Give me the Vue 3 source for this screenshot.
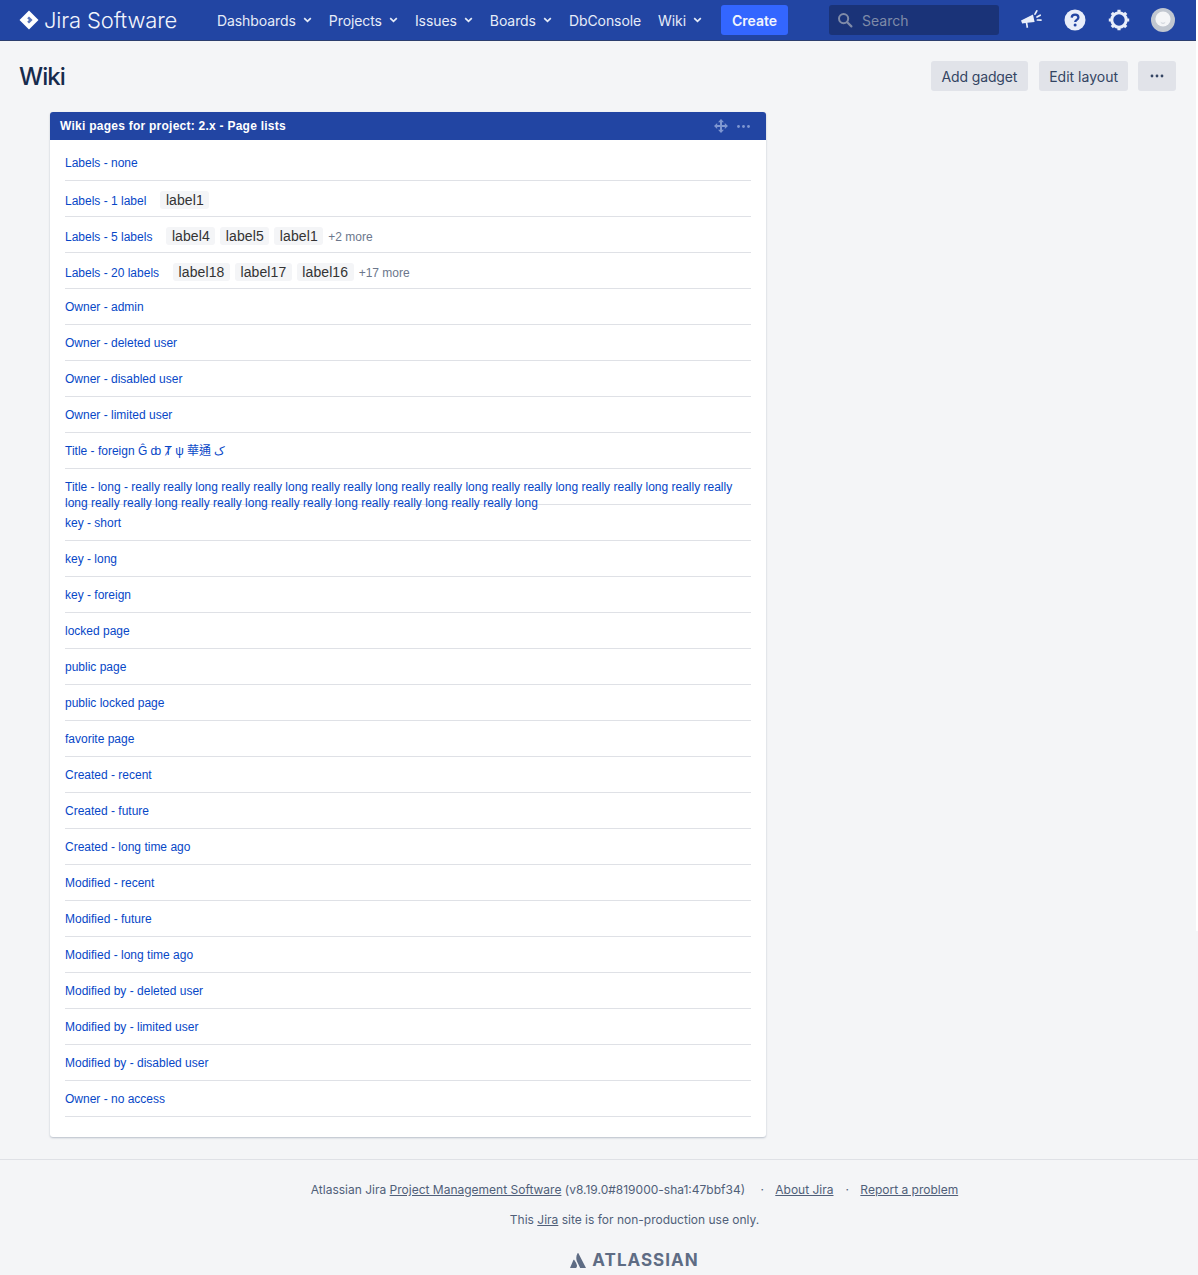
<script setup>
const nav = [
  { t: 'Dashboards', c: true },
  { t: 'Projects', c: true },
  { t: 'Issues', c: true },
  { t: 'Boards', c: true },
  { t: 'DbConsole', c: false },
  { t: 'Wiki', c: true }
]
const longTitle = 'Title - long - really really long really really long really really long really really long really really long really really long really really long really really long really really long really really long really really long really really long'
const rows = [
  { t: 'Labels - none' },
  { t: 'Labels - 1 label', tags: ['label1'] },
  { t: 'Labels - 5 labels', tags: ['label4', 'label5', 'label1'], more: '+2 more' },
  { t: 'Labels - 20 labels', tags: ['label18', 'label17', 'label16'], more: '+17 more' },
  { t: 'Owner - admin' },
  { t: 'Owner - deleted user' },
  { t: 'Owner - disabled user' },
  { t: 'Owner - limited user' },
  { t: 'Title - foreign Ĝ ȸ Ⱦ ψ 華通 ک' },
  { t: longTitle },
  { t: 'key - short' },
  { t: 'key - long' },
  { t: 'key - foreign' },
  { t: 'locked page' },
  { t: 'public page' },
  { t: 'public locked page' },
  { t: 'favorite page' },
  { t: 'Created - recent' },
  { t: 'Created - future' },
  { t: 'Created - long time ago' },
  { t: 'Modified - recent' },
  { t: 'Modified - future' },
  { t: 'Modified - long time ago' },
  { t: 'Modified by - deleted user' },
  { t: 'Modified by - limited user' },
  { t: 'Modified by - disabled user' },
  { t: 'Owner - no access' }
]
</script>

<template>
  <div class="page">
    <header class="topbar">
      <div class="logo">
        <svg class="logo-mark" width="20" height="20" viewBox="0 0 20 20">
          <path fill="#fff" d="M10 0.5 19.5 10 10 19.5 0.5 10Z" />
          <path fill="#2245a3" d="M10 6.4 13.6 10 10 13.6 8.2 11.8 10 10 8.2 8.2Z" opacity="0.75" />
        </svg>
        <span class="logo-text">Jira Software</span>
      </div>
      <nav class="nav">
        <a v-for="n in nav" :key="n.t" class="nav-item">
          {{ n.t }}
          <svg v-if="n.c" width="9" height="6" viewBox="0 0 9 6"><path d="M1.2 1.2 4.5 4.4 7.8 1.2" fill="none" stroke="#e6ecf8" stroke-width="1.7" /></svg>
        </a>
        <button class="create">Create</button>
      </nav>
      <div class="search">
        <svg width="16" height="16" viewBox="0 0 16 16"><circle cx="6.6" cy="6.6" r="4.6" fill="none" stroke="#7f8ba8" stroke-width="2" /><path d="M10.2 10.2 14.4 14.4" stroke="#7f8ba8" stroke-width="2.2" stroke-linecap="round" /></svg>
        <span>Search</span>
      </div>
      <div class="tools">
        <svg width="22" height="22" viewBox="0 0 22 22">
          <path fill="#e9eefa" d="M1 11.5 13 5.5 14.6 13 7.4 13.8 8.2 18.6 6.6 18.9 5.7 14 2.2 14.4Z" />
          <path d="M15 5.2 16.8 1.8M17 8 20.2 6.2M17.4 11 21 11.2" stroke="#e9eefa" stroke-width="1.7" stroke-linecap="round" />
        </svg>
        <svg width="22" height="22" viewBox="0 0 22 22">
          <circle cx="11" cy="11" r="10.5" fill="#e9eefa" />
          <path d="M7.7 8.6C7.8 6.6 9.2 5.6 11.1 5.6 13 5.6 14.4 6.7 14.4 8.4 14.4 10.8 11.2 10.8 11.2 13" fill="none" stroke="#2245a3" stroke-width="2.3" />
          <circle cx="11.1" cy="16" r="1.5" fill="#2245a3" />
        </svg>
        <svg width="22" height="22" viewBox="0 0 22 22">
          <circle cx="11" cy="11" r="7.2" fill="none" stroke="#e9eefa" stroke-width="3" />
          <g stroke="#e9eefa" stroke-width="3.2">
            <path d="M11 0.8V3.6M11 18.4V21.2M0.8 11H3.6M18.4 11H21.2M3.8 3.8 5.8 5.8M16.2 16.2 18.2 18.2M3.8 18.2 5.8 16.2M16.2 5.8 18.2 3.8" />
          </g>
        </svg>
        <svg class="avatar" width="24" height="24" viewBox="0 0 24 24">
          <circle cx="12" cy="12" r="12" fill="#c1c7d0" />
          <circle cx="12" cy="11" r="7.6" fill="#f4f5f7" />
          <path d="M9.8 14.4C10.8 15.6 13.2 15.6 14.2 14.4" fill="none" stroke="#c1c7d0" stroke-width="0.8" />
        </svg>
      </div>
    </header>

    <main class="main">
      <div class="title-row">
        <h1>Wiki</h1>
        <div class="actions">
          <button class="btn tight">Add gadget</button>
          <button class="btn edit">Edit layout</button>
          <button class="btn dots" aria-label="more">
            <svg width="14" height="4" viewBox="0 0 14 4"><circle cx="2" cy="2" r="1.4" /><circle cx="7" cy="2" r="1.4" /><circle cx="12" cy="2" r="1.4" /></svg>
          </button>
        </div>
      </div>

      <section class="gadget">
        <div class="gadget-head">
          <span>Wiki pages for project: 2.x - Page lists</span>
          <div class="gadget-tools">
            <svg width="14" height="14" viewBox="0 0 14 14">
              <path d="M7 1V13M1 7H13" stroke="#7f97d1" stroke-width="2" />
              <path fill="#7f97d1" d="M7 0 10 3.2H4ZM7 14 4 10.8H10ZM0 7 3.2 4V10ZM14 7 10.8 10V4Z" />
            </svg>
            <svg width="13" height="3" viewBox="0 0 13 3" fill="#7f97d1"><circle cx="1.5" cy="1.5" r="1.4" /><circle cx="6.5" cy="1.5" r="1.4" /><circle cx="11.5" cy="1.5" r="1.4" /></svg>
          </div>
        </div>
        <ul class="list">
          <li v-for="r in rows" :key="r.t" class="row" :class="{ tagged: r.tags }">
            <a class="link">{{ r.t }}</a>
            <template v-if="r.tags">
              <span class="tags">
                <span v-for="l in r.tags" :key="l" class="tag">{{ l }}</span>
              </span>
              <span v-if="r.more" class="more">{{ r.more }}</span>
            </template>
          </li>
        </ul>
      </section>
    </main>

    <footer class="footer">
      <p class="foot-line">
        Atlassian Jira <a>Project Management Software</a> (v8.19.0#819000-sha1:47bbf34)
        <span class="sep">·</span> <a>About Jira</a>
        <span class="sep">·</span> <a>Report a problem</a>
      </p>
      <p class="foot-line second">This <a>Jira</a> site is for non-production use only.</p>
      <div class="atl">
        <svg width="16" height="15" viewBox="0 0 16 15">
          <path fill="#5e6c84" d="M7.6 0.3C6 2.9 5.9 5.9 7 8.4L10.2 15H16L8.4 0.3C8.2-0.1 7.8-0.1 7.6 0.3Z" />
          <path fill="#5e6c84" d="M4.3 7C4 6.6 3.6 6.7 3.4 7.1L0 15H6.2L7.1 12.9C6.6 10.8 5.7 8.8 4.3 7Z" />
        </svg>
        <span>ATLASSIAN</span>
      </div>
    </footer>
    <div class="edge-strip"></div>
  </div>
</template>

<style scoped>
.page {
  position: relative;
  width: 1198px;
  min-height: 1275px;
  background: #f4f5f7;
  font-family: Inter, "Liberation Sans", sans-serif;
  color: #172b4d;
  overflow: hidden;
}
.edge-strip {
  position: absolute;
  top: 0;
  right: 0;
  width: 2px;
  height: 931px;
  background: #fff;
}
.topbar {
  height: 40px;
  box-sizing: content-box;
  background: #2245a3;
  border-bottom: 1px solid #2c3e6e;
  display: flex;
  align-items: center;
}
.logo {
  display: flex;
  align-items: center;
  margin-left: 19px;
  width: 190px;
  gap: 5px;
}
.logo-text {
  color: #f2f5fc;
  font-size: 22px;
  font-weight: 300;
  letter-spacing: -0.15px;
  white-space: nowrap;
}
.nav {
  display: flex;
  align-items: center;
  margin-left: 8px;
}
.nav-item {
  display: flex;
  align-items: center;
  gap: 7px;
  color: #e6ecf8;
  font-size: 14px;
  letter-spacing: -0.08px;
  margin-right: 17px;
  white-space: nowrap;
}
.create {
  margin-left: 2px;
  width: 67px;
  height: 30px;
  border: 0;
  border-radius: 3px;
  background: #3366ff;
  color: #f2f5fc;
  font: 600 14px Inter, "Liberation Sans", sans-serif;
}
.search {
  margin-left: 41px;
  width: 170px;
  height: 30px;
  box-sizing: border-box;
  padding-left: 8px;
  border-radius: 3px;
  background: #1a3378;
  display: flex;
  align-items: center;
  gap: 9px;
  color: #7f8ba8;
  font-size: 14px;
}
.tools {
  display: flex;
  align-items: center;
  margin-left: 21px;
  gap: 22px;
}
.avatar {
  margin-left: -1px;
}
.main {
  padding: 0 22px 0 19px;
}
.title-row {
  height: 71px;
  display: flex;
  align-items: center;
  justify-content: space-between;
}
h1 {
  margin: 0;
  font-size: 24px;
  font-weight: 500;
  line-height: 28px;
  letter-spacing: -0.9px;
  color: #172b4d;
}
.actions {
  display: flex;
  gap: 10px;
  margin-top: -1px;
}
.btn {
  height: 30px;
  padding: 0 11px;
  border: 0;
  border-radius: 3px;
  background: #e1e3e9;
  color: #344563;
  font: 400 14px Inter, "Liberation Sans", sans-serif;
}
.tight {
  letter-spacing: -0.15px;
  margin-right: 1px;
}
.edit {
  padding: 0 10px;
}
.dots {
  width: 38px;
  display: flex;
  align-items: center;
  justify-content: center;
  fill: #344563;
}
.gadget {
  width: 716px;
  margin-left: 31px;
  background: #fff;
  border-radius: 3px;
  box-shadow: 0 1px 2px rgba(9, 30, 66, 0.25);
  padding-bottom: 20px;
}
.gadget-head {
  height: 28px;
  padding: 0 16px 0 10px;
  background: #2245a3;
  border-radius: 3px 3px 0 0;
  color: #fff;
  font: 700 12px/28px "Liberation Sans", sans-serif;
  letter-spacing: 0.25px;
  display: flex;
  align-items: center;
  justify-content: space-between;
}
.gadget-tools {
  display: flex;
  align-items: center;
  gap: 9px;
}
.list {
  list-style: none;
  margin: 0 15px;
  padding: 5px 0 0;
}
.row {
  height: 36px;
  box-sizing: border-box;
  border-bottom: 1px solid #dfe1e6;
  padding-top: 10px;
  font: 12px/16px "Liberation Sans", "Noto Sans CJK TC", sans-serif;
  display: flex;
  align-items: flex-start;
}
.tagged {
  padding-top: 12px;
}
.link {
  color: #0747c7;
}
.tags {
  display: flex;
  gap: 5px;
  margin-left: 14px;
  margin-top: -2px;
}
.tag {
  height: 18px;
  padding: 0 5.5px;
  border-radius: 3px;
  background: #f4f5f7;
  color: #333;
  font: 14px/18px "Liberation Sans", sans-serif;
  letter-spacing: 0.1px;
}
.more {
  margin-left: 5px;
  color: #6b778c;
}
.footer {
  margin-top: 22px;
  border-top: 1px solid #dfe1e6;
  text-align: center;
  font-size: 12px;
  color: #505f79;
  padding-left: 71px;
}
.foot-line {
  margin: 0;
  padding-top: 22px;
  line-height: 16px;
}
.foot-line a {
  text-decoration: underline;
}
.second {
  padding-top: 14px;
}
.sep {
  margin: 0 8px 0 12px;
}
.atl {
  margin-top: 23px;
  display: flex;
  justify-content: center;
  align-items: center;
  gap: 6px;
  color: #5e6c84;
  font-size: 17px;
  font-weight: 700;
  letter-spacing: 1px;
  line-height: 18px;
}
</style>

<style>
html, body { background: #fff; }
</style>
